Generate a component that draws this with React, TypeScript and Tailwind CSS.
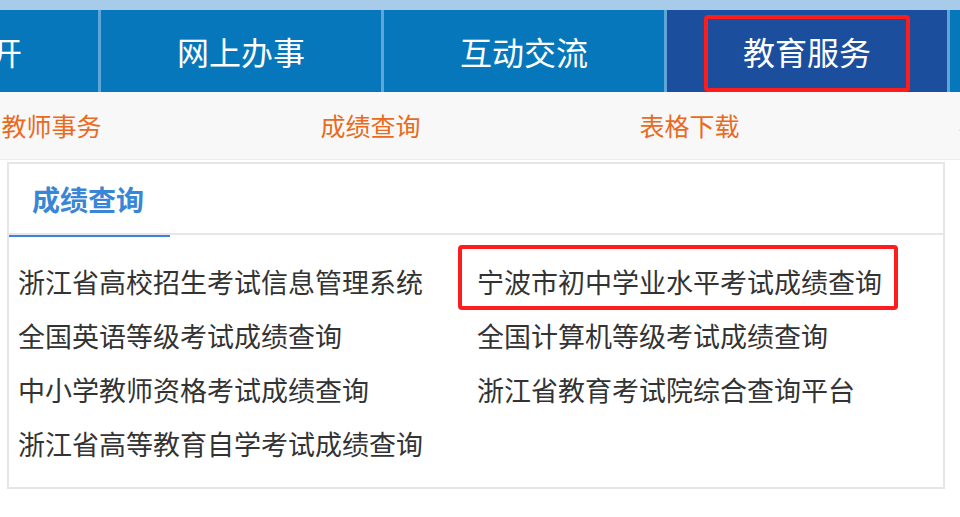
import React from "react";

const font = { fontFamily: '"Noto Sans CJK SC", "Noto Sans", sans-serif' };

const tabs = ["信息公开", "网上办事", "互动交流", "教育服务", "专题专栏"];
const subs = ["教师事务", "成绩查询", "表格下载", "学籍管理"];
const leftItems = [
  "浙江省高校招生考试信息管理系统",
  "全国英语等级考试成绩查询",
  "中小学教师资格考试成绩查询",
  "浙江省高等教育自学考试成绩查询",
];
const rightItems = [
  "宁波市初中学业水平考试成绩查询",
  "全国计算机等级考试成绩查询",
  "浙江省教育考试院综合查询平台",
];

export default function App() {
  return (
    <div className="w-[960px] h-[517px] overflow-hidden bg-white" style={font}>
      <div className="h-[10px] bg-[#a7cbe9]" />
      <div className="h-[82px] bg-[#0677bb] flex ml-[-182px]">
        {tabs.map((t, i) => (
          <div key={t} className="flex shrink-0">
            {i > 0 && <div className="w-[3px] bg-[#5ea5d8]" />}
            <div
              className={`relative w-[280px] flex items-center justify-center text-[32px] text-white leading-none ${
                i === 3 ? "bg-[#1c4e9e]" : ""
              }`}
            >
              <span className="-mt-[1px]">{t}</span>
              {i === 3 && (
                <div className="absolute left-[37px] right-[37px] top-[5px] bottom-0 border-[4px] border-[#ff1c1c] rounded-[4px]" />
              )}
            </div>
          </div>
        ))}
      </div>
      <div className="h-[68px] bg-[#f8f8f8] flex items-center ml-[-108px] border-b border-[#ececec]">
        {subs.map((s) => (
          <div key={s} className="w-[319px] shrink-0 text-center text-[25px] leading-none text-[#ea6a20]">
            {s}
          </div>
        ))}
      </div>
      <div className="ml-[7px] mt-[2px] w-[938px] h-[327px] border-2 border-[#e6e6e6] flex flex-col">
        <div className="h-[71px] border-b-2 border-[#e6e6e6] flex">
          <div className="w-[161px] h-[73px] border-b-2 border-[#3f80de] flex items-center pl-[23px]">
            <span className="text-[28px] font-bold text-[#3a86d6] leading-none -mt-[2px]">成绩查询</span>
          </div>
        </div>
        <div className="flex pt-[19px] text-[27px] text-[#333333] leading-none">
          <div className="w-[468px] pl-[9px] flex flex-col">
            {leftItems.map((t) => (
              <div key={t} className="h-[54px] flex items-center">
                <span>{t}</span>
              </div>
            ))}
          </div>
          <div className="flex flex-col">
            {rightItems.map((t, i) => (
              <div key={t} className="relative h-[54px] flex items-center">
                <span>{t}</span>
                {i === 0 && (
                  <div className="absolute left-[-19px] right-[-16px] top-[-9px] bottom-[-2px] border-[4px] border-[#ff1c1c] rounded-[4px]" />
                )}
              </div>
            ))}
          </div>
        </div>
      </div>
    </div>
  );
}
